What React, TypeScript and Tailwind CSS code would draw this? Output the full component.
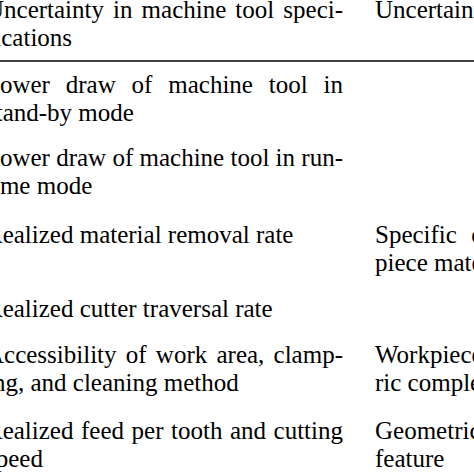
import React from "react";

function Lines({ lines }: { lines: string[] }) {
  return (
    <div className="flex flex-col">
      {lines.map((l, i) => (
        <div
          key={i}
          className={
            i < lines.length - 1
              ? "whitespace-nowrap text-justify [text-align-last:justify]"
              : "whitespace-nowrap text-left"
          }
        >
          {l}
        </div>
      ))}
    </div>
  );
}

function TableRow({ left, right }: { left: string[]; right: string[] }) {
  return (
    <div className="grid grid-cols-[357px_357px] gap-x-[32px]">
      <Lines lines={left} />
      <Lines lines={right} />
    </div>
  );
}

export default function App() {
  return (
    <div className="w-[474px] h-[474px] overflow-hidden bg-white text-black">
      <div
        className="ml-[-14px] mt-[-4.5px] text-[25px] leading-[28px]"
        style={{ fontFamily: '"Liberation Serif", "Times New Roman", serif' }}
      >
        <TableRow
          left={["Uncertainty in machine tool speci-", "fications"]}
          right={["Uncertainty in workpiece specification"]}
        />
        <div className="mt-[8.5px] h-[2px] w-[760px] bg-[#404040]" />
        <div className="mt-[9px]">
          <TableRow
            left={["Power draw of machine tool in", "stand-by mode"]}
            right={[]}
          />
        </div>
        <div className="mt-[17px]">
          <TableRow
            left={["Power draw of machine tool in run-", "time mode"]}
            right={[]}
          />
        </div>
        <div className="mt-[20.5px]">
          <TableRow
            left={["Realized material removal rate"]}
            right={["Specific cutting energy of work-", "piece material"]}
          />
        </div>
        <div className="mt-[18px]">
          <TableRow left={["Realized cutter traversal rate"]} right={[]} />
        </div>
        <div className="mt-[18.5px]">
          <TableRow
            left={["Accessibility of work area, clamp-", "ing, and cleaning method"]}
            right={["Workpiece and feature geomet-", "ric complexity"]}
          />
        </div>
        <div className="mt-[19.5px]">
          <TableRow
            left={["Realized feed per tooth and cutting", "speed"]}
            right={["Geometric accuracy of the", "feature"]}
          />
        </div>
      </div>
    </div>
  );
}
